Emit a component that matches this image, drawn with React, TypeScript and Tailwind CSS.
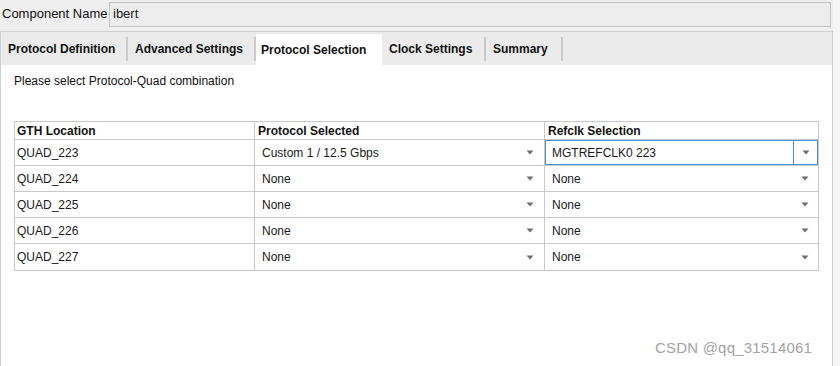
import React from "react";

const tabs = [
  { label: "Protocol Definition", w: "w-[127px]", sep: true, active: false },
  { label: "Advanced Settings", w: "w-[128px]", sep: true, active: false },
  { label: "Protocol Selection", w: "w-[126px]", sep: false, active: true },
  { label: "Clock Settings", w: "w-[104px]", sep: true, active: false },
  { label: "Summary", w: "w-[77px]", sep: true, active: false },
];

const rows = [
  { loc: "QUAD_223", proto: "Custom 1 / 12.5 Gbps", ref: "MGTREFCLK0 223", focus: true },
  { loc: "QUAD_224", proto: "None", ref: "None", focus: false },
  { loc: "QUAD_225", proto: "None", ref: "None", focus: false },
  { loc: "QUAD_226", proto: "None", ref: "None", focus: false },
  { loc: "QUAD_227", proto: "None", ref: "None", focus: false },
];

function Arrow() {
  return (
    <svg width="8" height="5" viewBox="0 0 8 5" className="shrink-0">
      <path d="M0.5 0.5 L7.5 0.5 L4 4.5 Z" fill="#6e6e6e" />
    </svg>
  );
}

export default function App() {
  return (
    <div
      className="relative w-[840px] h-[366px] bg-[#f5f5f5] flex flex-col overflow-hidden text-[12px] text-[#1a1a1a]"
      style={{ fontFamily: '"Liberation Sans", Arial, sans-serif' }}
    >
      {/* top row */}
      <div className="h-[28px] w-[833px] bg-[#efefef] flex items-center">
        <span className="pl-[2px] w-[109px] text-[13px] text-[#111]">Component Name</span>
        <div className="w-[722px] h-[25px] border border-[#c4c4c4] bg-[#ededed] flex items-center pl-[3px] text-[13px]">
          ibert
        </div>
      </div>
      <div className="h-[3px] w-[833px] bg-[#efefef]" />
      {/* tab panel */}
      <div className="w-[833px] flex-1 flex flex-col border-t border-l border-r border-[#cfcfcf] bg-white">
        <div className="h-[33px] bg-[#ebebeb] flex items-end">
          {tabs.map((t) =>
            t.active ? (
              <div
                key={t.label}
                className={`${t.w} h-[31px] bg-white flex items-center pl-[5px] font-bold text-[12px] text-[#111]`}
              >
                {t.label}
              </div>
            ) : (
              <div key={t.label} className={`${t.w} h-[33px] flex items-center`}>
                <span className="flex-1 pl-[7px] font-bold text-[12px] text-[#111]">{t.label}</span>
                {t.sep && <div className="w-[2px] h-[24px] bg-[#c9c9c9]" />}
              </div>
            )
          )}
        </div>
        <div className="flex-1 bg-white pl-[13px] pt-[8px]">
          <div className="h-[16px] leading-[16px] text-[12px] text-[#111]">
            Please select Protocol-Quad combination
          </div>
          <div className="mt-[32px] w-[805px] border border-[#c8c8c8]">
            <div className="h-[18px] flex border-b border-[#c8c8c8] font-bold text-[12px] text-[#111]">
              <div className="w-[240px] pl-[2px] flex items-center border-r border-[#c8c8c8]">GTH Location</div>
              <div className="w-[290px] pl-[3px] flex items-center border-r border-[#c8c8c8]">Protocol Selected</div>
              <div className="flex-1 pl-[3px] flex items-center">Refclk Selection</div>
            </div>
            {rows.map((r, i) => (
              <div
                key={r.loc}
                className={`h-[26px] flex ${i < rows.length - 1 ? "border-b border-[#c8c8c8]" : ""}`}
              >
                <div className="w-[240px] pl-[2px] flex items-center border-r border-[#c8c8c8]">{r.loc}</div>
                <div className="w-[290px] pl-[7px] pr-[10px] flex items-center justify-between border-r border-[#c8c8c8]">
                  <span>{r.proto}</span>
                  <Arrow />
                </div>
                {r.focus ? (
                  <div className="flex-1 flex border border-[#4a90d9] bg-white">
                    <div className="flex-1 pl-[6px] flex items-center">{r.ref}</div>
                    <div className="w-[24px] border-l border-[#4a90d9] flex items-center justify-center">
                      <Arrow />
                    </div>
                  </div>
                ) : (
                  <div className="flex-1 pl-[7px] pr-[9px] flex items-center justify-between">
                    <span>{r.ref}</span>
                    <Arrow />
                  </div>
                )}
              </div>
            ))}
          </div>
        </div>
      </div>
      <div className="absolute left-[655px] top-[337px] text-[15px] text-[#a3a3a3] tracking-[0.2px]">
        CSDN @qq_31514061
      </div>
    </div>
  );
}
